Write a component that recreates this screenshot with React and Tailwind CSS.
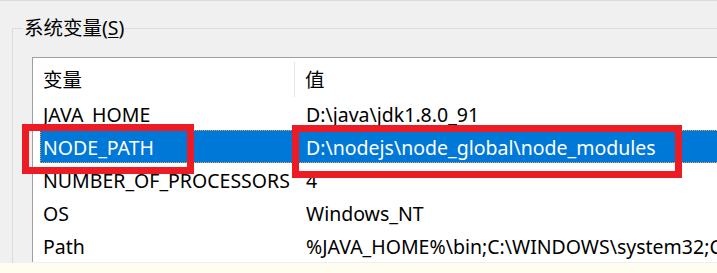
import React from "react";

// rows of the system variables list
const rows = [
  { name: "JAVA_HOME", value: "D:\\java\\jdk1.8.0_91" },
  { name: "NODE_PATH", value: "D:\\nodejs\\node_global\\node_modules", selected: true },
  { name: "NUMBER_OF_PROCESSORS", value: "4" },
  { name: "OS", value: "Windows_NT" },
  { name: "Path", value: "%JAVA_HOME%\\bin;C:\\WINDOWS\\system32;C:\\WINDOWS;C:\\WINDOWS\\System32\\Wbem" },
];

const App = () => {
  return (
    <div
      className="relative w-[717px] h-[273px] overflow-hidden bg-[#f0f0f0] text-[19.5px] text-black"
      style={{ fontFamily: '"Noto Sans", "Noto Sans CJK SC", sans-serif' }}
    >
      <div className="h-px bg-[#dadada]"></div>
      <fieldset className="ml-[12px] mt-[14px] border-l border-t border-[#dcdcdc] h-[300px]">
        <legend className="ml-[10px] px-px leading-[26px]">
          系统变量(<span className="underline underline-offset-2">S</span>)
        </legend>
        <div className="ml-[19px] mt-[16px] bg-white border-l border-t border-[#a0a0a0]">
          {/* header */}
          <div className="flex h-[39px] items-center pl-[7px] pt-[4px]">
            <div className="w-[255px] h-full flex items-center pl-[3px] border-r border-[#e5e5e5]">
              <span>变量</span>
            </div>
            <div className="pl-[10px]">值</div>
          </div>
          {/* rows */}
          {rows.map((r) => (
            <div
              key={r.name}
              className={
                r.selected
                  ? "flex h-[33px] items-center pt-[3px] ml-[7px] bg-[#0078d7] text-white border border-dotted border-[#f0a040]"
                  : "flex h-[33px] items-center pt-[3px] ml-[7px] border border-transparent"
              }
            >
              <div className="w-[255px] shrink-0 pl-[2px] whitespace-nowrap overflow-hidden">{r.name}</div>
              <div className="pl-[10px] whitespace-nowrap">{r.value}</div>
            </div>
          ))}
        </div>
      </fieldset>
      <div className="absolute left-0 right-0 top-[263px] bottom-0 bg-[#fffdf0]"></div>
      {/* red annotation boxes */}
      <div className="absolute left-[22px] top-[124px] w-[172px] h-[50px] border-[7px] border-[#ed1c24]"></div>
      <div className="absolute left-[292px] top-[125px] w-[390px] h-[53px] border-[7px] border-[#ed1c24]"></div>
    </div>
  );
};

export default App;
